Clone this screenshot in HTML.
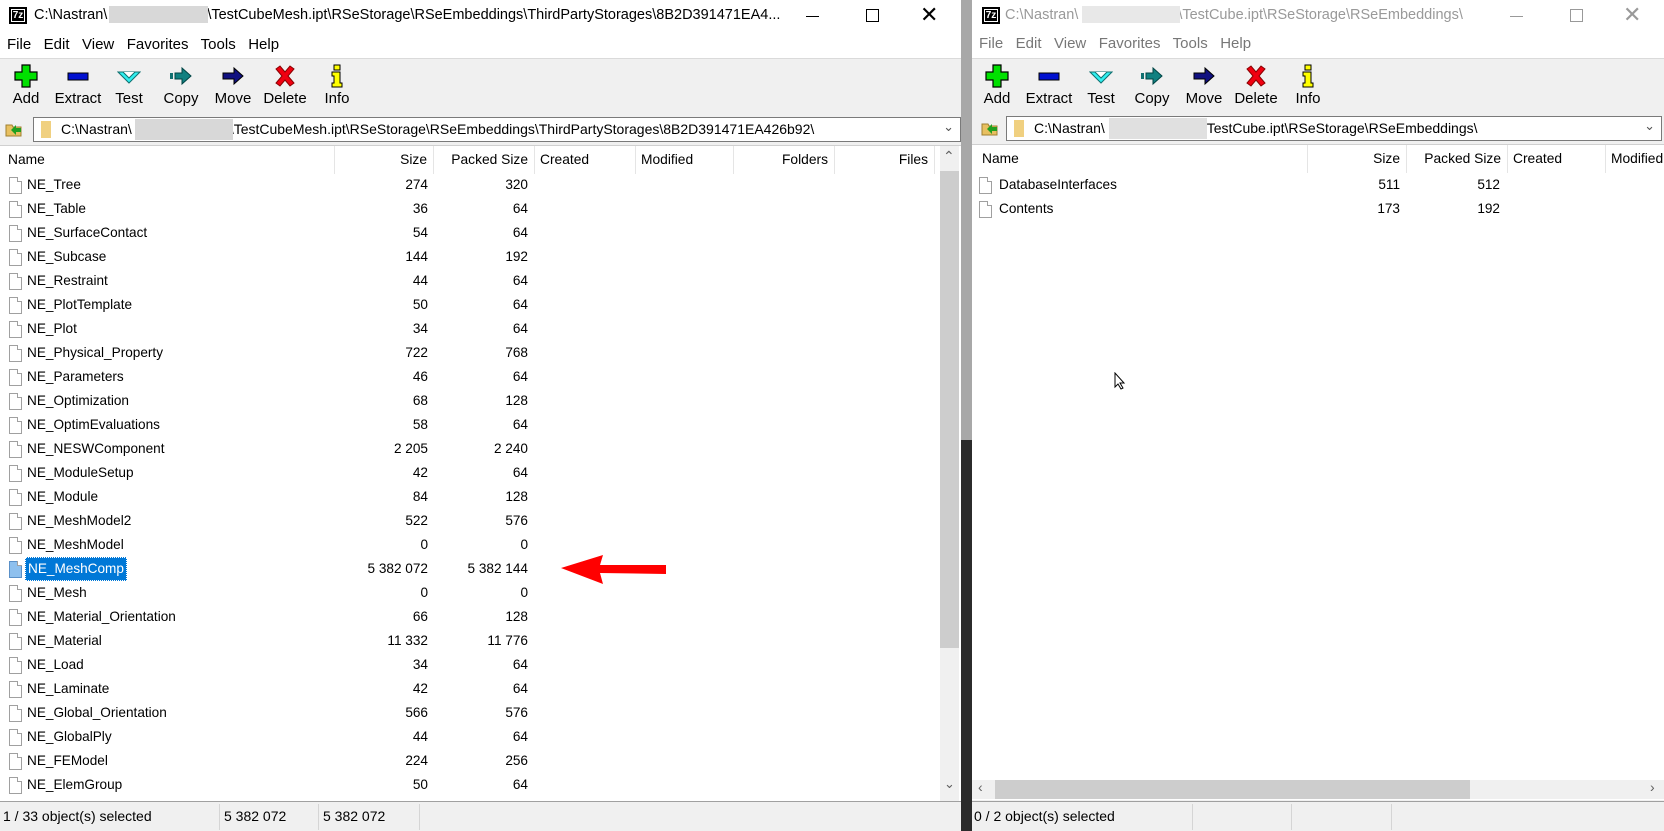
<!DOCTYPE html>
<html><head><meta charset="utf-8"><style>
*{margin:0;padding:0;box-sizing:border-box}
body{width:1664px;height:831px;overflow:hidden;position:relative;background:#2b2b2b;font-family:"Liberation Sans",sans-serif;font-size:14px;color:#000}
.a{position:absolute;white-space:nowrap}
.win{position:absolute;top:0;height:831px;background:#f0f0f0;overflow:hidden}
.tb{position:absolute;left:0;right:0;top:0;height:32px;background:#fff}
.menu{position:absolute;left:0;right:0;top:32px;height:26px;background:#fff}
.tool{position:absolute;left:0;right:0;top:58px;height:54px;background:#f0f0f0;border-top:1px solid #dadada}
.lbl{position:absolute;top:90px;font-size:15px;text-align:center;width:60px;margin-left:-30px}
.ico{position:absolute;top:64px;width:24px;height:24px;margin-left:-12px}
.addr{position:absolute;top:117px;height:25px;background:#fff;border:1px solid #7a7a7a}
.list{position:absolute;top:145px;background:#fff;border-top:1px solid #d0d0d0}
.hd{position:absolute;top:0;height:28px;line-height:28px;font-size:13.8px;padding:0 6px}
.sep{position:absolute;top:0;width:1px;height:28px;background:#e5e5e5}
.row{position:absolute;left:0;height:24px;line-height:24px;font-size:13.6px}
.fi{position:absolute;top:4px;width:13px;height:17px;border:1px solid #a0a0a0;background:#fff}
.fi:after{content:"";position:absolute;right:-1px;top:-1px;width:4px;height:4px;background:#fff;border-left:1px solid #a0a0a0;border-bottom:1px solid #a0a0a0}
.num{position:absolute;text-align:right}
.status{position:absolute;top:801px;height:30px;left:0;right:0;background:#f0f0f0;border-top:1px solid #a0a0a0;line-height:28px;font-size:14px}
.ss{position:absolute;top:2px;width:1px;height:26px;background:#d5d5d5}
.blur{position:absolute;background:#d8d8d8}
</style></head><body>

<div class="a" style="left:961px;top:0;width:11px;height:440px;background:#a8a8a8"></div>

<div class="win" style="left:0;width:961px">
 <div class="tb">
  <div class="a" style="left:9px;top:7px;width:18px;height:17px;border:2px solid #000;background:#fff;font:bold 10px 'Liberation Sans';line-height:13px;text-align:center"><span style="background:#000;color:#fff;padding:0 1px">7z</span></div>
  <div class="a" style="left:34px;top:7px;font-size:14.5px">C:\Nastran\<span style="display:inline-block;width:100px"></span>\TestCubeMesh.ipt\RSeStorage\RSeEmbeddings\ThirdPartyStorages\8B2D391471EA4...</div>
  <div class="blur" style="left:109px;top:6px;width:99px;height:17px"></div>
  <div class="a" style="left:806px;top:16px;width:13px;height:1px;background:#000"></div>
  <div class="a" style="left:866px;top:9px;width:13px;height:13px;border:1px solid #000"></div>
  <div class="a" style="left:920px;top:2px;font-size:22px;font-weight:300">✕</div>
 </div>
 <div class="menu"><div class="a" style="left:7px;top:4px;font-size:15px">File &nbsp; Edit &nbsp; View &nbsp; Favorites &nbsp; Tools &nbsp; Help</div></div>
 <div class="tool"></div>
 <svg class="ico" style="left:26px" viewBox="0 0 24 24"><path d="M8 1h8v7h7v8h-7v7H8v-7H1V8h7z" fill="#00e000" stroke="#000" stroke-width="1.2"/></svg>
 <svg class="ico" style="left:78px" viewBox="0 0 24 24"><rect x="2" y="9" width="20" height="7" fill="#0010d0" stroke="#000"/></svg>
 <svg class="ico" style="left:129px" viewBox="0 0 24 24"><path d="M1 8h22l-11 11z" fill="#30f0f0" stroke="#107070"/><path d="M6 8l6 6 6-6" fill="#fff" stroke="#107070"/></svg>
 <svg class="ico" style="left:181px" viewBox="0 0 24 24"><rect x="1" y="9" width="3" height="6" fill="#107070"/><path d="M6 9h7V4l9 8-9 8v-5H6z" fill="#108080" stroke="#044"/></svg>
 <svg class="ico" style="left:233px" viewBox="0 0 24 24"><path d="M2 9h11V4l9 8-9 8v-5H2z" fill="#101080" stroke="#000"/></svg>
 <svg class="ico" style="left:285px" viewBox="0 0 24 24"><path d="M3 5l4-3 5 6 5-6 4 3-6 7 6 7-4 3-5-6-5 6-4-3 6-7z" fill="#f00010" stroke="#800"/></svg>
 <svg class="ico" style="left:337px" viewBox="0 0 24 24"><rect x="9" y="1" width="6" height="5" fill="#ff0" stroke="#000"/><path d="M7 8h8v11h2v4H7v-4h2v-7H7z" fill="#ff0" stroke="#000"/></svg>
 <div class="lbl" style="left:26px">Add</div><div class="lbl" style="left:78px">Extract</div><div class="lbl" style="left:129px">Test</div><div class="lbl" style="left:181px">Copy</div><div class="lbl" style="left:233px">Move</div><div class="lbl" style="left:285px">Delete</div><div class="lbl" style="left:337px">Info</div>
 <svg class="a" style="left:5px;top:121px" width="18" height="16" viewBox="0 0 18 16"><path d="M1 4h6l1 2h8v9H1z" fill="#e8c060" stroke="#a08030"/><path d="M6 9l5-5 0 3h5v4h-5v3z" fill="#20a020"/></svg>
 <div class="addr" style="left:33px;width:928px">
  <div class="a" style="left:7px;top:3px;width:10px;height:17px;background:#f0d080"></div>
  <div class="a" style="left:27px;top:3px;font-size:14px">C:\Nastran\<span style="display:inline-block;width:98px"></span>\TestCubeMesh.ipt\RSeStorage\RSeEmbeddings\ThirdPartyStorages\8B2D391471EA426b92\</div>
  <div class="blur" style="left:101px;top:1px;width:98px;height:21px"></div>
  <div class="a" style="right:6px;top:1px;font-size:13px;color:#555">&#8964;</div>
 </div>
 <div class="list" style="left:0;width:961px;height:656px">
  <div class="hd" style="left:2px">Name</div>
  <div class="sep" style="left:334px"></div>
  <div class="hd" style="left:334px;width:99px;text-align:right">Size</div>
  <div class="sep" style="left:433px"></div>
  <div class="hd" style="left:433px;width:101px;text-align:right">Packed Size</div>
  <div class="sep" style="left:534px"></div>
  <div class="hd" style="left:534px">Created</div>
  <div class="sep" style="left:635px"></div>
  <div class="hd" style="left:635px">Modified</div>
  <div class="sep" style="left:733px"></div>
  <div class="hd" style="left:733px;width:101px;text-align:right">Folders</div>
  <div class="sep" style="left:834px"></div>
  <div class="hd" style="left:834px;width:100px;text-align:right">Files</div>
  <div class="sep" style="left:934px"></div>
  <div class="a" style="left:940px;top:0;width:19px;height:656px;background:#f0f0f0"></div>
  <div class="a" style="left:940px;top:25px;width:19px;height:477px;background:#cdcdcd"></div>
  <div class="a" style="left:943px;top:2px;font-size:14px;color:#606060">&#8963;</div>
  <div class="a" style="left:944px;top:630px;font-size:13px;color:#606060">&#8964;</div>
 </div>
 <div id="rows"></div>
 <div class="status">
  <div class="a" style="left:3px">1 / 33 object(s) selected</div>
  <div class="ss" style="left:219px"></div>
  <div class="a" style="left:224px">5 382 072</div>
  <div class="ss" style="left:318px"></div>
  <div class="a" style="left:323px">5 382 072</div>
  <div class="ss" style="left:419px"></div>
 </div>
</div>

<div class="win" style="left:972px;width:692px">
 <div class="tb">
  <div class="a" style="left:10px;top:7px;width:18px;height:17px;border:2px solid #000;background:#fff;font:bold 10px 'Liberation Sans';line-height:13px;text-align:center"><span style="background:#000;color:#fff;padding:0 1px">7z</span></div>
  <div class="a" style="left:33px;top:7px;font-size:14.5px;color:#999">C:\Nastran\<span style="display:inline-block;width:100px"></span>\TestCube.ipt\RSeStorage\RSeEmbeddings\</div>
  <div class="blur" style="left:110px;top:6px;width:98px;height:17px;background:#e8e8e8"></div>
  <div class="a" style="left:538px;top:16px;width:13px;height:1px;background:#999"></div>
  <div class="a" style="left:598px;top:9px;width:13px;height:13px;border:1px solid #999"></div>
  <div class="a" style="left:651px;top:2px;font-size:22px;color:#999">✕</div>
 </div>
 <div class="menu"><div class="a" style="left:7px;top:3px;font-size:15px;color:#777">File &nbsp; Edit &nbsp; View &nbsp; Favorites &nbsp; Tools &nbsp; Help</div></div>
 <div class="tool"></div>
 <svg class="ico" style="left:25px" viewBox="0 0 24 24"><path d="M8 1h8v7h7v8h-7v7H8v-7H1V8h7z" fill="#00e000" stroke="#000" stroke-width="1.2"/></svg>
 <svg class="ico" style="left:77px" viewBox="0 0 24 24"><rect x="2" y="9" width="20" height="7" fill="#0010d0" stroke="#000"/></svg>
 <svg class="ico" style="left:129px" viewBox="0 0 24 24"><path d="M1 8h22l-11 11z" fill="#30f0f0" stroke="#107070"/><path d="M6 8l6 6 6-6" fill="#fff" stroke="#107070"/></svg>
 <svg class="ico" style="left:180px" viewBox="0 0 24 24"><rect x="1" y="9" width="3" height="6" fill="#107070"/><path d="M6 9h7V4l9 8-9 8v-5H6z" fill="#108080" stroke="#044"/></svg>
 <svg class="ico" style="left:232px" viewBox="0 0 24 24"><path d="M2 9h11V4l9 8-9 8v-5H2z" fill="#101080" stroke="#000"/></svg>
 <svg class="ico" style="left:284px" viewBox="0 0 24 24"><path d="M3 5l4-3 5 6 5-6 4 3-6 7 6 7-4 3-5-6-5 6-4-3 6-7z" fill="#f00010" stroke="#800"/></svg>
 <svg class="ico" style="left:336px" viewBox="0 0 24 24"><rect x="9" y="1" width="6" height="5" fill="#ff0" stroke="#000"/><path d="M7 8h8v11h2v4H7v-4h2v-7H7z" fill="#ff0" stroke="#000"/></svg>
 <div class="lbl" style="left:25px">Add</div><div class="lbl" style="left:77px">Extract</div><div class="lbl" style="left:129px">Test</div><div class="lbl" style="left:180px">Copy</div><div class="lbl" style="left:232px">Move</div><div class="lbl" style="left:284px">Delete</div><div class="lbl" style="left:336px">Info</div>
 <svg class="a" style="left:9px;top:120px" width="18" height="16" viewBox="0 0 18 16"><path d="M1 4h6l1 2h8v9H1z" fill="#e8c060" stroke="#a08030"/><path d="M6 9l5-5 0 3h5v4h-5v3z" fill="#20a020"/></svg>
 <div class="addr" style="left:34px;width:656px;top:116px">
  <div class="a" style="left:7px;top:3px;width:10px;height:17px;background:#f0d080"></div>
  <div class="a" style="left:27px;top:3px;font-size:14px">C:\Nastran\<span style="display:inline-block;width:98px"></span>\TestCube.ipt\RSeStorage\RSeEmbeddings\</div>
  <div class="blur" style="left:102px;top:1px;width:98px;height:21px;background:#e0e0e0"></div>
  <div class="a" style="right:6px;top:1px;font-size:13px;color:#555">&#8964;</div>
 </div>
 <div class="list" style="left:0;width:692px;height:656px;top:144px">
  <div class="hd" style="left:4px">Name</div>
  <div class="sep" style="left:335px"></div>
  <div class="hd" style="left:335px;width:99px;text-align:right">Size</div>
  <div class="sep" style="left:434px"></div>
  <div class="hd" style="left:434px;width:101px;text-align:right">Packed Size</div>
  <div class="sep" style="left:535px"></div>
  <div class="hd" style="left:535px">Created</div>
  <div class="sep" style="left:633px"></div>
  <div class="hd" style="left:633px">Modified</div>
  <div class="row" style="top:28px;width:692px"><div class="fi" style="left:7px"></div><div class="a" style="left:27px">DatabaseInterfaces</div><div class="num" style="left:330px;width:98px">511</div><div class="num" style="left:430px;width:98px">512</div></div>
  <div class="row" style="top:52px;width:692px"><div class="fi" style="left:7px"></div><div class="a" style="left:27px">Contents</div><div class="num" style="left:330px;width:98px">173</div><div class="num" style="left:430px;width:98px">192</div></div>
  <div class="a" style="left:0;top:635px;width:692px;height:19px;background:#f0f0f0"></div>
  <div class="a" style="left:23px;top:635px;width:475px;height:19px;background:#cdcdcd"></div>
  <div class="a" style="left:6px;top:634px;font-size:14px;color:#606060">&#8249;</div>
  <div class="a" style="left:678px;top:634px;font-size:14px;color:#606060">&#8250;</div>
 </div>
 <svg class="a" style="left:142px;top:372px" width="12" height="18" viewBox="0 0 12 18"><path d="M1 1v14l3-3 3 5 2-1-3-5h4z" fill="#fff" stroke="#000"/></svg>
 <div class="status">
  <div class="a" style="left:2px">0 / 2 object(s) selected</div>
  <div class="ss" style="left:220px"></div><div class="ss" style="left:319px"></div><div class="ss" style="left:419px"></div>
 </div>
</div>

<svg class="a" style="left:555px;top:550px" width="115" height="40" viewBox="555 550 115 40"><path d="M561 568L603 555L600 565L666 565L666 574L600 573L603 584Z" fill="#f00"/></svg>

<script>
var d=[["NE_Tree","274","320"],["NE_Table","36","64"],["NE_SurfaceContact","54","64"],["NE_Subcase","144","192"],["NE_Restraint","44","64"],["NE_PlotTemplate","50","64"],["NE_Plot","34","64"],["NE_Physical_Property","722","768"],["NE_Parameters","46","64"],["NE_Optimization","68","128"],["NE_OptimEvaluations","58","64"],["NE_NESWComponent","2 205","2 240"],["NE_ModuleSetup","42","64"],["NE_Module","84","128"],["NE_MeshModel2","522","576"],["NE_MeshModel","0","0"],["NE_MeshComp","5 382 072","5 382 144"],["NE_Mesh","0","0"],["NE_Material_Orientation","66","128"],["NE_Material","11 332","11 776"],["NE_Load","34","64"],["NE_Laminate","42","64"],["NE_Global_Orientation","566","576"],["NE_GlobalPly","44","64"],["NE_FEModel","224","256"],["NE_ElemGroup","50","64"]];
var h="";
d.forEach(function(r,i){var t=173+i*24;var sel=i==16;
h+='<div class="row" style="top:'+t+'px;width:940px">'+
'<div class="fi" style="left:9px;'+(sel?'background:#8ec0ee;border-color:#5a90c8':'')+'"></div>'+
'<div class="a" style="left:27px;'+(sel?'background:#0078d7;color:#fff;padding:0 3px;outline:1px dotted #fff;outline-offset:-1px;left:25px':'')+'">'+r[0]+'</div>'+
'<div class="num" style="left:330px;width:98px">'+r[1]+'</div><div class="num" style="left:430px;width:98px">'+r[2]+'</div></div>';});
document.getElementById("rows").innerHTML=h;
</script>
</body></html>
